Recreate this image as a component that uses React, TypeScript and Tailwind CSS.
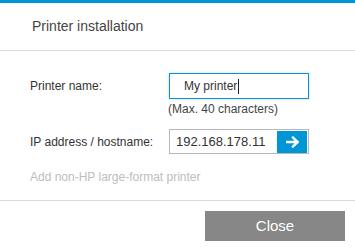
import React from "react";

export default function App() {
  return (
    <div
      className="w-[355px] h-[251px] bg-white flex flex-col overflow-hidden"
      style={{ fontFamily: '"Liberation Sans", Arial, sans-serif' }}
    >
      <div className="h-[3px] bg-[#0096d6] shrink-0" />
      <div className="h-[48px] shrink-0 flex items-center pl-[32px] border-b border-[#dadada] text-[14px] text-[#444]">
        Printer installation
      </div>
      <div className="flex-1 flex flex-col pl-[30px] pt-[22px]">
        <div className="flex items-center">
          <div className="w-[139px] text-[12px] text-[#333]">Printer name:</div>
          <div className="w-[140px] h-[26px] border border-[#0096d6] shadow-[0_0_3px_rgba(0,0,0,0.18)] flex items-center pl-[14px] text-[12px] text-[#333]">
            My printer
            <span className="inline-block w-px h-[15px] bg-[#222] ml-px" />
          </div>
        </div>
        <div className="ml-[138px] mt-[3px] leading-[14px] text-[12px] text-[#444]">
          (Max. 40 characters)
        </div>
        <div className="flex items-center mt-[13px]">
          <div className="w-[139px] text-[12px] text-[#333]">IP address / hostname:</div>
          <div className="w-[140px] h-[25px] border border-[#b8b8b8] flex items-center justify-between pl-[6px] pr-px">
            <span className="text-[13px] text-[#333]">192.168.178.11</span>
            <div className="w-[30px] h-[22px] bg-[#0096d6] flex items-center justify-center">
              <svg width="13" height="12" viewBox="0 0 13 12" fill="none">
                <path
                  d="M1 6H11.5M7 1.5L11.5 6L7 10.5"
                  stroke="white"
                  strokeWidth="2.4"
                  strokeLinecap="square"
                />
              </svg>
            </div>
          </div>
        </div>
        <div className="mt-[16px] leading-[14px] text-[12px] text-[#bdbdbd]">
          Add non-HP large-format printer
        </div>
      </div>
      <div className="h-[51px] shrink-0 border-t border-[#dadada] flex justify-end items-start pt-[10px] pr-[10px]">
        <div className="w-[140px] h-[30px] bg-[#878787] flex items-center justify-center text-white text-[15px]">
          Close
        </div>
      </div>
    </div>
  );
}
